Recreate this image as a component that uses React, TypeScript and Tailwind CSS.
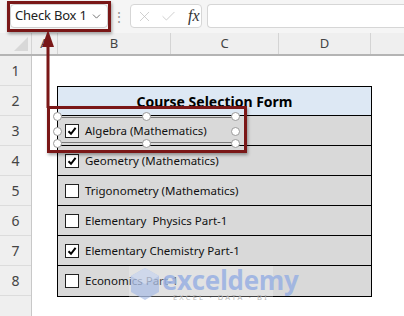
import { ChevronDown, X, Check } from 'lucide-react'

const font = { fontFamily: '"Noto Sans", "Open Sans", sans-serif' }

const rows = [
  { label: 'Algebra (Mathematics)', checked: true },
  { label: 'Geometry (Mathematics)', checked: true },
  { label: 'Trigonometry (Mathematics)', checked: false },
  { label: 'Elementary  Physics Part-1', checked: false },
  { label: 'Elementary Chemistry Part-1', checked: true },
  { label: 'Economics Part-1', checked: false },
]

function Box({ checked }: { checked: boolean }) {
  return (
    <div className="w-[14px] h-[14px] border border-[#222] bg-white flex items-center justify-center shrink-0">
      {checked && (
        <svg width="10" height="10" viewBox="0 0 10 10">
          <path d="M1.5 5.2 L4 7.8 L8.6 1.8" fill="none" stroke="#000" strokeWidth="2" />
        </svg>
      )}
    </div>
  )
}

function Handle({ x, y }: { x: number; y: number }) {
  return (
    <div
      className="absolute w-[9px] h-[9px] rounded-full bg-white border-[1.5px] border-[#9a9a9a]"
      style={{ left: x - 4.5, top: y - 4.5 }}
    />
  )
}

export default function App() {
  return (
    <div className="relative w-[404px] h-[316px] overflow-hidden bg-white text-[#333]" style={font}>
      {/* formula bar */}
      <div className="h-[33px] bg-[#f5f5f5] flex items-start pt-[4px] pl-[10px]">
        <div className="w-[98px] h-[24px] bg-white border border-[#d0d0d0] rounded-[4px] flex items-center justify-between pl-[4px] pr-[4px]">
          <span className="text-[13px] text-[#222] whitespace-nowrap tracking-[-0.2px]">Check Box 1</span>
          <ChevronDown size={13} strokeWidth={1.5} className="text-[#555] shrink-0" />
        </div>
        <div className="w-[22px] h-[24px] flex items-center justify-center text-[#999] text-[14px]">⋮</div>
        <div className="w-[72px] h-[24px] bg-white border border-[#d6d6d6] rounded-[4px] flex items-center pl-[5px] gap-[7px]">
          <X size={17} strokeWidth={1} className="text-[#bcbcbc]" />
          <Check size={17} strokeWidth={1} className="text-[#bcbcbc]" />
          <span className="ml-[4px] text-[16px] italic text-[#333]" style={{ fontFamily: '"Liberation Serif", serif' }}>fx</span>
        </div>
        <div className="ml-[5px] flex-1 h-[24px] bg-white border border-[#d6d6d6] rounded-l-[4px] border-r-0" />
      </div>

      {/* column headers */}
      <div className="h-[23px] bg-[#efefef] border-b-2 border-[#b4b4b4] flex text-[13px] text-[#444]">
        <div className="w-[32px] relative border-r border-[#d4d4d4]">
          <div className="absolute right-[3px] bottom-[3px] w-0 h-0 border-l-[14px] border-l-transparent border-b-[14px] border-b-[#d8d8d8]" />
        </div>
        <div className="w-[26px] border-r border-[#d4d4d4] flex items-center justify-center">A</div>
        <div className="w-[113px] border-r border-[#d4d4d4] flex items-center justify-center">B</div>
        <div className="w-[108px] border-r border-[#d4d4d4] flex items-center justify-center">C</div>
        <div className="w-[92px] border-r border-[#d4d4d4] flex items-center justify-center">D</div>
        <div className="flex-1" />
      </div>

      {/* sheet body */}
      <div className="flex">
        <div className="w-[32px] bg-[#efefef] border-r border-[#c8c8c8] text-[14px] text-[#444]">
          {[1, 2, 3, 4, 5, 6, 7, 8, 9].map((n) => (
            <div key={n} className="h-[30px] border-b border-[#dcdcdc] flex items-center justify-center">
              {n < 9 ? n : ''}
            </div>
          ))}
        </div>
        <div className="flex-1">
          <div className="h-[30px]" />
          <div className="ml-[25px] w-[315px] border border-black">
            <div className="h-[29px] bg-[#dde8f4] border-b border-black flex items-center justify-center text-[14px] font-bold text-black">
              Course Selection Form
            </div>
            {rows.map((r, i) => (
              <div
                key={i}
                className={`h-[30px] bg-[#d9d9d9] flex items-center gap-[6px] pl-[7px] ${i < rows.length - 1 ? 'border-b border-black' : ''}`}
              >
                <Box checked={r.checked} />
                <span className="text-[11.5px] text-[#111] whitespace-pre">{r.label}</span>
              </div>
            ))}
          </div>
        </div>
      </div>

      {/* selected control frame */}
      <div className="absolute left-[57px] top-[117px] w-[178px] h-[26px] border-y border-[#7a7a7a]" />
      <Handle x={57} y={116} />
      <Handle x={146} y={116} />
      <Handle x={235} y={116} />
      <Handle x={57} y={131} />
      <Handle x={235} y={131} />
      <Handle x={57} y={143} />
      <Handle x={146} y={143} />
      <Handle x={235} y={143} />

      {/* annotation */}
      <div className="absolute left-[7px] top-[1px] w-[104px] h-[31px] border-[3px] border-[#7a1717] shadow-[1px_2px_3px_rgba(0,0,0,0.35)]" />
      <div className="absolute left-[47px] top-[106px] w-[200px] h-[47px] border-[3px] border-[#7a1717] shadow-[1px_2px_3px_rgba(0,0,0,0.35)]" />
      <svg className="absolute left-[40px] top-[29px]" width="16" height="80" viewBox="0 0 16 80">
        <path d="M8 1 L14 18 L2 18 Z" fill="#7a1717" />
        <rect x="6.5" y="16" width="3" height="63" fill="#7a1717" />
      </svg>

      {/* watermark */}
      <div className="absolute left-[129px] top-[266px] w-[144px] h-[36px] bg-white/25 flex items-center">
        <svg width="32" height="34" viewBox="0 0 32 34" className="opacity-70 shrink-0">
          <path d="M16 1 L30 9 L30 25 L16 33 L2 25 L2 9 Z" fill="#a9bde6" />
          <path d="M16 1 L30 9 L16 17 L2 9 Z" fill="#c8d5f0" />
        </svg>
        <div className="ml-[1px] flex flex-col leading-none">
          <span className="text-[26px] font-bold text-[#98b0e2]/85 tracking-[-0.3px] leading-[26px]" style={{ fontFamily: '"Open Sans", sans-serif' }}>exceldemy</span>
          <span className="ml-[11px] text-[7.5px] text-[#b8b8b8] tracking-[2.2px] leading-[8px]">EXCEL · DATA · BI</span>
        </div>
      </div>
    </div>
  )
}
